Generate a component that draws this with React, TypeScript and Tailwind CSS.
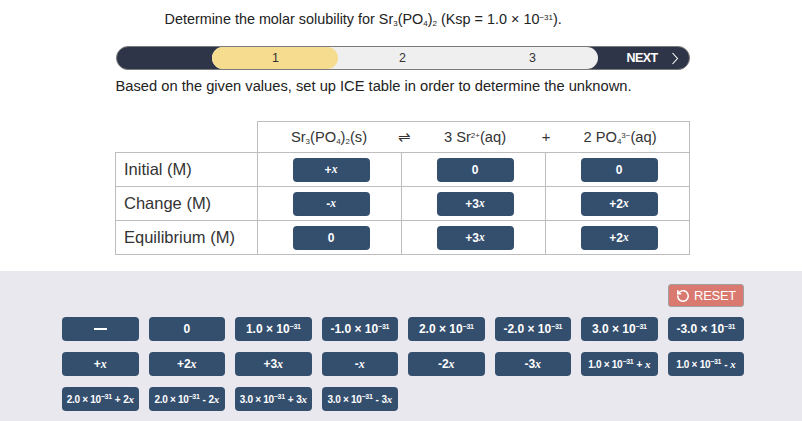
import React from "react";

const X = ({ s = "text-[12px]" }: { s?: string }) => (
  <i className={"font-['Liberation_Serif','DejaVu_Serif',serif] font-bold " + s}>x</i>
);
const E = () => (
  <>
    10<sup className="text-[7px] relative -top-[2px] tracking-[-0.3px]">−31</sup>
  </>
);
const Op = ({ c }: { c: string }) => <span className="mx-[3px]">{c}</span>;

const Btn = ({ children, className = "" }: { children: React.ReactNode; className?: string }) => (
  <div
    className={
      "h-[24px] rounded-[4px] bg-[#344e6e] text-white flex items-center justify-center font-bold whitespace-nowrap " +
      (className.includes("text-[") ? "" : "text-[12px] ") +
      className
    }
  >
    {children}
  </div>
);

export default function App() {
  const rows: { label: string; vals: React.ReactNode[] }[] = [
    { label: "Initial (M)", vals: [<>+<X s="text-[11.5px]" /></>, "0", "0"] },
    { label: "Change (M)", vals: [<>-<X s="text-[11.5px]" /></>, <>+3<X s="text-[11.5px]" /></>, <>+2<X s="text-[11.5px]" /></>] },
    { label: "Equilibrium (M)", vals: ["0", <>+3<X s="text-[11.5px]" /></>, <>+2<X s="text-[11.5px]" /></>] },
  ];

  const sm = "text-[10px] tracking-[-0.3px]";
  const sx = "text-[11px]";

  return (
    <div className="w-[802px] h-[421px] bg-white font-['Liberation_Sans',Arial,sans-serif] text-[#222] flex flex-col overflow-hidden">
      <div className="flex flex-col items-center">
        <div className="w-[574px] ml-[3px] pl-[49px] pt-[11px] text-[14.4px] leading-[17px]">
          Determine the molar solubility for Sr<sub className="text-[8px]">3</sub>(PO<sub className="text-[8px]">4</sub>)<sub className="text-[8px]">2</sub> (Ksp = 1.0 × 10<sup className="text-[8px]">−31</sup>).
        </div>

        <div className="mt-[18px] ml-[3px] w-[574px] h-[24px] rounded-full bg-[#2f3548] border border-[#7a7a7a] flex items-stretch overflow-hidden">
          <div className="w-[95px]" />
          <div className="w-[386px] rounded-full bg-[#efefef] flex text-[12.5px] text-[#333]">
            <div className="w-[126px] rounded-full bg-[#f5dc8f] flex items-center justify-center pl-[2px]">1</div>
            <div className="w-[130px] flex items-center justify-center">2</div>
            <div className="w-[130px] flex items-center justify-center">3</div>
          </div>
          <div className="flex-1 flex items-center justify-end pr-[10px] text-white text-[12.5px] font-bold tracking-[-0.6px]">
            <span>NEXT</span>
            <svg width="8" height="13" viewBox="0 0 8 13" className="ml-[13px]">
              <path d="M1.5 1 L6.5 6.5 L1.5 12" stroke="white" strokeWidth="1.1" fill="none" />
            </svg>
          </div>
        </div>

        <div className="w-[574px] ml-[3px] mt-[8px] text-[14.7px] leading-[17px]">
          Based on the given values, set up ICE table in order to determine the unknown.
        </div>

        <table className="mt-[26px] ml-[3px] border-collapse text-[#333]">
          <tbody>
            <tr className="h-[31px]">
              <td className="w-[142px] p-0 border-b border-[#bdbdbd]"></td>
              <td colSpan={3} className="p-0 border border-[#bdbdbd] text-[14.7px]">
                <div className="grid grid-cols-[122px_48px_94px_48px_98px] items-center">
                  <div className="text-center pl-[20px]">
                    Sr<sub className="text-[8px]">3</sub>(PO<sub className="text-[8px]">4</sub>)<sub className="text-[8px]">2</sub>(s)
                  </div>
                  <div className="text-center">⇌</div>
                  <div className="text-center">
                    3 Sr<sup className="text-[8px]">2+</sup>(aq)
                  </div>
                  <div className="text-center">+</div>
                  <div className="text-center pl-[2px]">
                    2 PO<sub className="text-[8px]">4</sub>
                    <sup className="text-[8px]">3−</sup>(aq)
                  </div>
                </div>
              </td>
            </tr>
            {rows.map((r) => (
              <tr key={r.label} className="h-[34px]">
                <td className="w-[142px] p-0 pl-[8px] border border-[#bdbdbd] text-[16.5px]">{r.label}</td>
                {r.vals.map((v, i) => (
                  <td key={i} className="w-[144px] p-0 border border-[#bdbdbd]">
                    <div className="flex justify-center">
                      <Btn className="w-[77px] ml-[3px]">{v}</Btn>
                    </div>
                  </td>
                ))}
              </tr>
            ))}
          </tbody>
        </table>
      </div>

      <div className="mt-[16px] flex-1 bg-[#e9e8ee] pt-[13px] pl-[62px]">
        <div className="w-[682px] flex flex-col">
          <div className="flex justify-end">
            <div className="w-[76px] h-[23px] rounded-[3px] bg-[#d9796f] border border-[#a0a0a0] text-white text-[13px] flex items-center justify-center gap-[4px] tracking-[-0.3px]">
              <svg width="14" height="14" viewBox="0 0 24 24" fill="none" stroke="white" strokeWidth="2.6" strokeLinecap="round" strokeLinejoin="round">
                <path d="M3 12a9 9 0 1 0 3-6.7L3 8" />
                <path d="M3 3v5h5" />
              </svg>
              RESET
            </div>
          </div>
          <div className="mt-[10px] grid grid-cols-8 gap-x-[10px] gap-y-[11px]">
            <Btn className="bg-[#5f5f5f]">
              <span className="block w-[13px] h-[1.5px] bg-white" />
            </Btn>
            <Btn>0</Btn>
            <Btn>1.0 × <E /></Btn>
            <Btn>-1.0 × <E /></Btn>
            <Btn>2.0 × <E /></Btn>
            <Btn>-2.0 × <E /></Btn>
            <Btn>3.0 × <E /></Btn>
            <Btn>-3.0 × <E /></Btn>

            <Btn>+<X /></Btn>
            <Btn>+2<X /></Btn>
            <Btn>+3<X /></Btn>
            <Btn>-<X /></Btn>
            <Btn>-2<X /></Btn>
            <Btn>-3<X /></Btn>
            <Btn className={sm}>1.0 × <E /><Op c="+" /><X s={sx} /></Btn>
            <Btn className={sm}>1.0 × <E /><Op c="-" /><X s={sx} /></Btn>

            <Btn className={sm}>2.0 × <E /><Op c="+" />2<X s={sx} /></Btn>
            <Btn className={sm}>2.0 × <E /><Op c="-" />2<X s={sx} /></Btn>
            <Btn className={sm}>3.0 × <E /><Op c="+" />3<X s={sx} /></Btn>
            <Btn className={sm}>3.0 × <E /><Op c="-" />3<X s={sx} /></Btn>
          </div>
        </div>
      </div>
    </div>
  );
}
